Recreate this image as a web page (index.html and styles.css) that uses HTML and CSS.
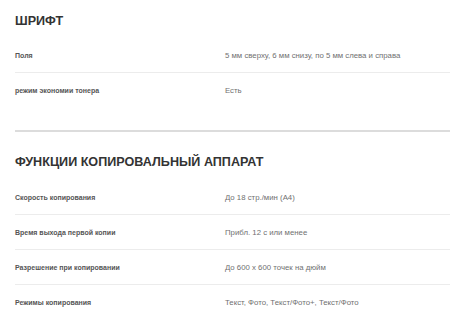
FILE: index.html
```html
<!DOCTYPE html>
<html lang="ru">
<head>
<meta charset="utf-8">
<title>Характеристики</title>
<link rel="stylesheet" href="styles.css">
</head>
<body>
<div class="specs">
  <section class="group">
    <h2 class="group-title">ШРИФТ</h2>
    <div class="row">
      <div class="label">Поля</div>
      <div class="value">5 мм сверху, 6 мм снизу, по 5 мм слева и справа</div>
    </div>
    <div class="row">
      <div class="label">режим экономии тонера</div>
      <div class="value">Есть</div>
    </div>
  </section>
  <hr class="group-sep">
  <section class="group">
    <h2 class="group-title">ФУНКЦИИ КОПИРОВАЛЬНЫЙ АППАРАТ</h2>
    <div class="row">
      <div class="label">Скорость копирования</div>
      <div class="value">До 18 стр./мин (A4)</div>
    </div>
    <div class="row">
      <div class="label">Время выхода первой копии</div>
      <div class="value">Прибл. 12 с или менее</div>
    </div>
    <div class="row">
      <div class="label">Разрешение при копировании</div>
      <div class="value">До 600 x 600 точек на дюйм</div>
    </div>
    <div class="row">
      <div class="label">Режимы копирования</div>
      <div class="value">Текст, Фото, Текст/Фото+, Текст/Фото</div>
    </div>
  </section>
</div>
</body>
</html>
```

FILE: styles.css
```css
html, body {
  margin: 0;
  padding: 0;
  background: #fff;
}

body {
  font-family: "Liberation Sans", Arial, sans-serif;
  color: #555;
  overflow: hidden;
}

.specs {
  padding: 11px 0 0 15px;
}

.group-title {
  margin: 0 0 7px;
  font-size: 12.6px;
  line-height: 20px;
  font-weight: bold;
  color: #333;
}

.group-sep + .group .group-title {
  margin-top: 20px;
  margin-bottom: 8px;
}

.row {
  display: grid;
  grid-template-columns: 210px 1fr;
  align-items: center;
  height: 34px;
  border-bottom: 1px solid #ececec;
}

.row:last-child {
  border-bottom: none;
}

.label {
  font-size: 7px;
  font-weight: bold;
  color: #555;
}

.value {
  font-size: 7.8px;
  color: #707070;
}

.group-sep {
  margin: 23px 0 0;
  border: none;
  height: 2px;
  background: #dcdcdc;
}
```
